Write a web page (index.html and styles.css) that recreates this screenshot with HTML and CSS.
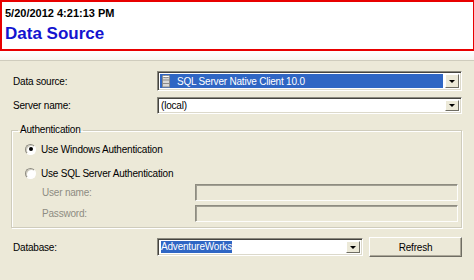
FILE: index.html
```html
<!DOCTYPE html>
<html lang="en">
<head>
  <meta charset="UTF-8">
  <title>Data Source</title>
  <link rel="stylesheet" href="styles.css">
</head>
<body>
  <div class="header">
    <div class="stamp">5/20/2012 4:21:13 PM</div>
    <div class="title">Data Source</div>
  </div>
  <div class="strip"></div>
  <div class="panel">
    <div class="row row-source">
      <div class="label">Data source:</div>
      <div class="combo">
        <div class="combo-value selected">
          <svg class="db-icon" width="8" height="13" viewBox="0 0 8 13">
            <rect x="0.5" y="1" width="7" height="11" fill="#d8d8d8" stroke="#8a8a8a"/>
            <ellipse cx="4" cy="1.5" rx="3.5" ry="1.2" fill="#fff" stroke="#8a8a8a"/>
            <line x1="1" y1="5" x2="7" y2="5" stroke="#8a8a8a"/>
            <line x1="1" y1="8.5" x2="7" y2="8.5" stroke="#8a8a8a"/>
          </svg>
          <span>SQL Server Native Client 10.0</span>
        </div>
        <div class="combo-btn"><span class="arrow"></span></div>
      </div>
    </div>
    <div class="row row-server">
      <div class="label">Server name:</div>
      <div class="combo">
        <div class="combo-value">(local)</div>
        <div class="combo-btn"><span class="arrow"></span></div>
      </div>
    </div>

    <fieldset class="group">
      <legend>Authentication</legend>
      <div class="option">
        <span class="radio checked"></span>
        <span>Use Windows Authentication</span>
      </div>
      <div class="option">
        <span class="radio"></span>
        <span>Use SQL Server Authentication</span>
      </div>
      <div class="cred">
        <div class="label disabled">User name:</div>
        <div class="textbox"></div>
      </div>
      <div class="cred">
        <div class="label disabled">Password:</div>
        <div class="textbox"></div>
      </div>
    </fieldset>

    <div class="row row-db">
      <div class="label">Database:</div>
      <div class="db-controls">
        <div class="combo combo-db">
          <div class="combo-value"><span class="hilite">AdventureWorks</span></div>
          <div class="combo-btn"><span class="arrow"></span></div>
        </div>
        <div class="button">Refresh</div>
      </div>
    </div>
  </div>
</body>
</html>
```

FILE: styles.css
```css
body {
  margin: 0;
  padding: 0;
  width: 474px;
  height: 280px;
  overflow: hidden;
  background-color: #ece9d8;
  font-family: "Liberation Sans", Arial, sans-serif;
  font-size: 10px;
  letter-spacing: -0.2px;
  color: #000;
}
.header {
  box-sizing: border-box;
  height: 51px;
  border: 2px solid #e80000;
  border-right-width: 1px;
  background-color: #fff;
  padding: 4px 0 0 3px;
  letter-spacing: 0;
}
.stamp {
  font-size: 11px;
  font-weight: bold;
  line-height: 14px;
}
.title {
  font-size: 17px;
  font-weight: bold;
  color: #1414cf;
  line-height: 22px;
  margin-top: 3px;
}
.strip {
  height: 9px;
  background: linear-gradient(#fff, #f6f5ef);
}
.panel {
  border-top: 1px solid #cfccbd;
  padding: 10px 12px 0 13px;
}
.row {
  display: grid;
  grid-template-columns: 144px 1fr;
  align-items: center;
}
.row-source .combo { height: 20px; }
.row-server { margin-top: 6px; }
.row-server .combo { height: 17px; }
.combo {
  box-sizing: border-box;
  display: flex;
  background-color: #fff;
  border: 1px solid;
  border-color: #8b897e #fff #fff #8b897e;
  box-shadow: inset 1px 1px #45443f, inset -1px -1px #dcd9cb;
  padding: 2px;
}
.combo-value {
  flex: 1;
  display: flex;
  align-items: center;
  padding-left: 1px;
}
.combo-value.selected {
  background-color: #2f66c4;
  color: #fff;
  margin-right: 2px;
  padding-left: 2px;
}
.db-icon {
  margin-right: 7px;
}
.combo-btn {
  box-sizing: border-box;
  width: 14px;
  background-color: #ece9d8;
  border: 1px solid;
  border-color: #fff #6f6d63 #6f6d63 #fff;
  display: flex;
  align-items: center;
  justify-content: center;
}
.arrow {
  width: 0;
  height: 0;
  border-left: 3px solid transparent;
  border-right: 3px solid transparent;
  border-top: 3px solid #000;
}
.group {
  margin: 10px 0 0 -2px;
  padding: 0 3px 5px 13px;
  border: 1px solid #cfccbc;
  box-shadow: inset 1px 1px #fff, 1px 1px #fff;
}
.group legend {
  padding: 0 2px;
  margin-left: -7px;
  line-height: 12px;
}
.option {
  display: flex;
  align-items: center;
  gap: 5px;
  height: 14px;
  margin-top: 6px;
}
.option + .option {
  margin-top: 10px;
}
.radio {
  box-sizing: border-box;
  width: 11px;
  height: 11px;
  border-radius: 50%;
  background-color: #fff;
  border: 1px solid;
  border-color: #8d8b80 #fff #fff #8d8b80;
  box-shadow: inset 1px 1px #cfccbe;
  display: flex;
  align-items: center;
  justify-content: center;
}
.radio.checked::after {
  content: "";
  width: 4px;
  height: 4px;
  border-radius: 50%;
  background-color: #000;
}
.cred {
  display: grid;
  grid-template-columns: 153px 1fr;
  align-items: center;
  padding-left: 17px;
  margin-top: 4px;
}
.cred + .cred {
  margin-top: 4px;
}
.label.disabled {
  color: #8e8c82;
}
.textbox {
  box-sizing: border-box;
  height: 17px;
  border: 1px solid;
  border-color: #8e8c80 #fdfdfb #fdfdfb #8e8c80;
  box-shadow: inset 1px 1px #a19f93;
  background-color: #ece9d8;
}
.row-db {
  margin-top: 9px;
}
.db-controls {
  display: flex;
  align-items: center;
  gap: 6px;
}
.combo-db {
  width: 206px;
  height: 18px;
}
.hilite {
  background-color: #2f66c4;
  color: #fff;
  line-height: 12px;
}
.button {
  box-sizing: border-box;
  width: 93px;
  height: 20px;
  border: 1px solid;
  border-color: #fff #6f6d63 #6f6d63 #fff;
  box-shadow: inset -1px -1px #aca899;
  display: flex;
  align-items: center;
  justify-content: center;
}
```
